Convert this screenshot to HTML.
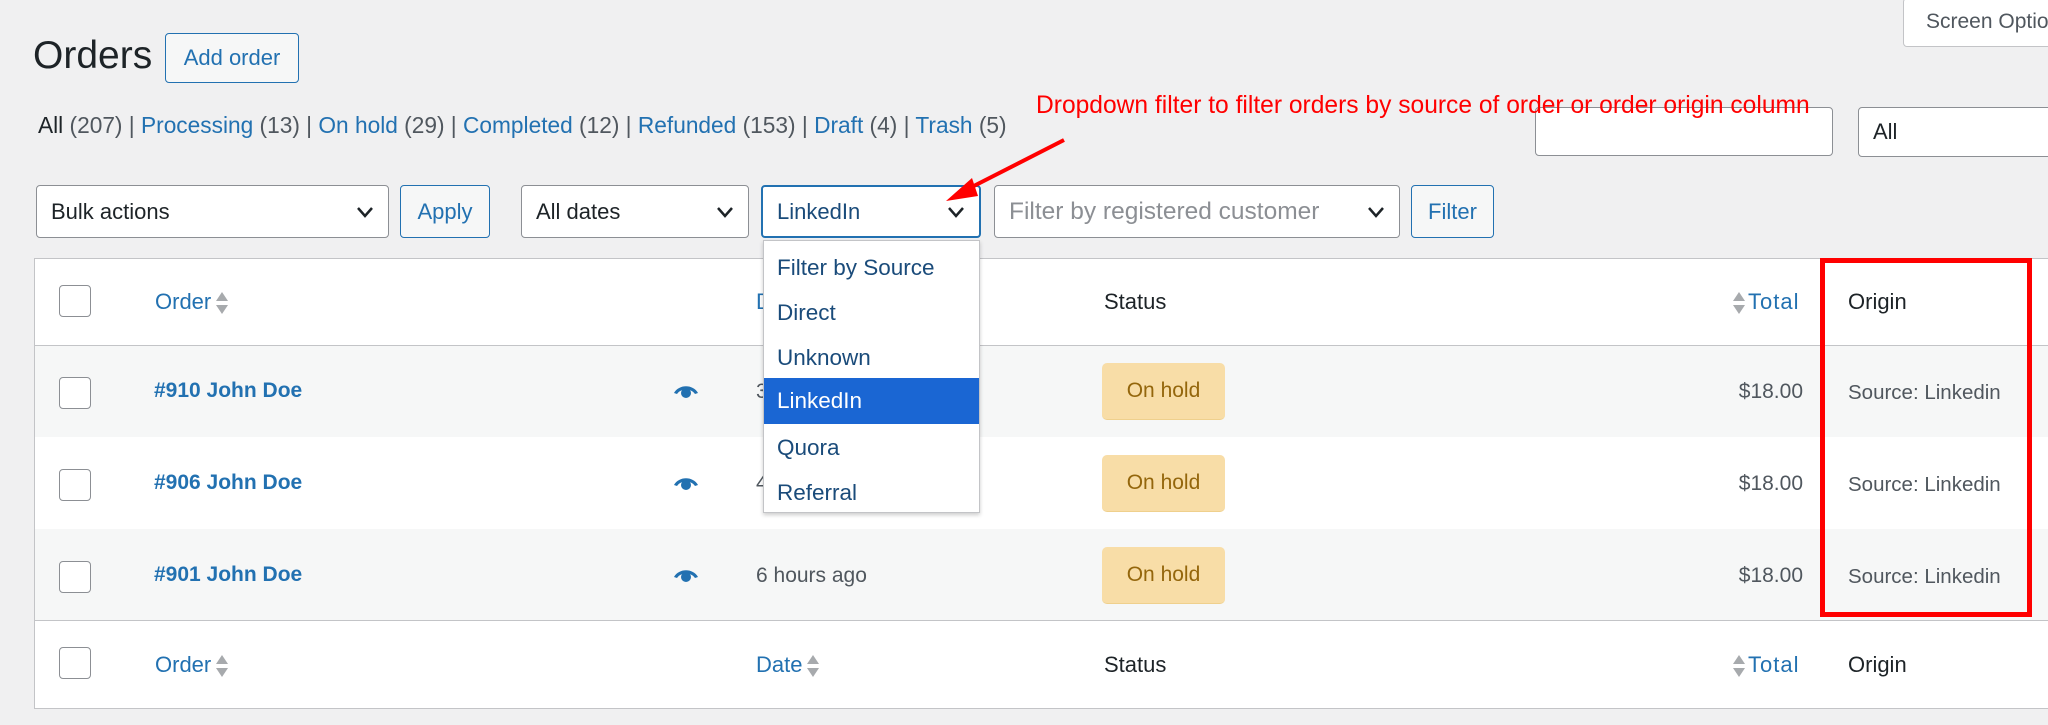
<!DOCTYPE html>
<html><head><meta charset="utf-8"><style>
*{box-sizing:border-box;margin:0;padding:0}
body{width:2048px;height:725px;background:#f0f0f1;font-family:"Liberation Sans",sans-serif;color:#1d2327;position:relative;overflow:hidden}
.a{position:absolute;white-space:nowrap}
.blue{color:#2271b1}
.sel{position:absolute;background:#fff;border:1px solid #8c8f94;border-radius:4px;font-size:22px;padding-left:14px;display:flex;align-items:center}
.sel svg{position:absolute;right:14px;top:50%;margin-top:-6px}
.btn{position:absolute;background:#f6f7f7;border:1px solid #2271b1;border-radius:4px;color:#2271b1;font-size:22px;display:flex;align-items:center;justify-content:center}
.cb{position:absolute;left:59px;width:32px;height:32px;border:1px solid #8c8f94;border-radius:4px;background:#fff}
.badge{position:absolute;left:1102px;width:123px;height:57px;background:#f8dda7;border-radius:5px;color:#94660c;font-size:21px;display:flex;align-items:center;justify-content:center;border-bottom:1px solid #efd08d}
.row{position:absolute;left:35px;width:2013px;height:92px}
.t{font-size:21px}
.opt{position:absolute;left:0;width:100%;height:45px;padding-left:13px;font-size:22.5px;color:#1a4b7a;display:flex;align-items:center}
.sa{display:inline-block;vertical-align:middle;margin:0 4px}
</style></head><body>
<div class="a" style="left:1903px;top:-2px;width:160px;height:49px;background:#fff;border:1px solid #c3c4c7;border-radius:4px;font-size:21px;color:#50575e;padding:11px 0 0 22px">Screen Options</div>
<div class="a" style="left:33px;top:34px;font-size:39px;color:#1d2327">Orders</div>
<div class="btn" style="left:165px;top:33px;width:134px;height:50px">Add order</div>
<div class="a" style="left:38px;top:112px;font-size:22.7px;color:#50575e"><span style="color:#1d2327">All</span> (207) | <span class="blue">Processing</span> (13) | <span class="blue">On hold</span> (29) | <span class="blue">Completed</span> (12) | <span class="blue">Refunded</span> (153) | <span class="blue">Draft</span> (4) | <span class="blue">Trash</span> (5)</div>
<div class="a" style="left:1535px;top:107px;width:298px;height:49px;background:#fff;border:1px solid #8c8f94;border-radius:4px"></div>
<div class="sel" style="left:1858px;top:107px;width:220px;height:50px">All</div>
<div class="a" style="left:1036px;top:92px;font-size:24.6px;color:#f00">Dropdown filter to filter orders by source of order or order origin column</div>

<div class="sel" style="left:36px;top:185px;width:353px;height:53px">Bulk actions<svg width="18" height="12"><path d="M2 2l7 8 7-8" stroke="#1d2327" stroke-width="2.5" fill="none"/></svg></div>
<div class="btn" style="left:400px;top:185px;width:90px;height:53px">Apply</div>
<div class="sel" style="left:521px;top:185px;width:228px;height:53px">All dates<svg width="18" height="12"><path d="M2 2l7 8 7-8" stroke="#1d2327" stroke-width="2.5" fill="none"/></svg></div>
<div class="sel" style="left:761px;top:185px;width:220px;height:53px;border:2px solid #2271b1;color:#1a4b7a">LinkedIn<svg width="18" height="12"><path d="M2 2l7 8 7-8" stroke="#1d2327" stroke-width="2.5" fill="none"/></svg></div>
<div class="sel" style="left:994px;top:185px;width:406px;height:53px;color:#8c8f94;font-size:24.5px">Filter by registered customer<svg width="18" height="12"><path d="M2 2l7 8 7-8" stroke="#1d2327" stroke-width="2.5" fill="none"/></svg></div>
<div class="btn" style="left:1411px;top:185px;width:83px;height:53px">Filter</div>

<div class="a" style="left:34px;top:258px;width:2020px;height:451px;background:#fff;border:1px solid #c3c4c7"></div>
<div class="row" style="top:345px;background:#f6f7f7;border-top:1px solid #c3c4c7"></div>
<div class="row" style="top:437px;background:#fff"></div>
<div class="row" style="top:529px;background:#f6f7f7;height:92px;border-bottom:1px solid #c3c4c7"></div>

<div class="cb" style="top:285px"></div>
<div class="a t blue" style="left:155px;top:289px;font-size:22px">Order<svg class="sa" width="14" height="24"><path d="M7 1L13 10H1Z M7 23L13 14H1Z" fill="#a7aaad"/></svg></div>
<div class="a t" style="left:756px;top:289px;color:#2271b1;font-size:22px">Date</div>
<div class="a t" style="left:1104px;top:289px;font-size:22px">Status</div>
<div class="a t blue" style="left:1732px;top:289px;font-size:22px"><svg class="sa" style="margin:0 2px 0 0" width="14" height="24"><path d="M7 1L13 10H1Z M7 23L13 14H1Z" fill="#a7aaad"/></svg><span style="letter-spacing:1px">Total</span></div>
<div class="a t" style="left:1848px;top:289px;font-size:22px">Origin</div>

<div class="cb" style="top:377px"></div><div class="cb" style="top:469px"></div><div class="cb" style="top:561px"></div>
<div class="a t blue" style="left:154px;top:379px;font-weight:bold">#910 John Doe</div>
<div class="a t blue" style="left:154px;top:471px;font-weight:bold">#906 John Doe</div>
<div class="a t blue" style="left:154px;top:563px;font-weight:bold">#901 John Doe</div>
<svg class="a" style="left:673px;top:384px" width="26" height="16"><path d="M1 9C6 0 20 0 25 9L22 10C18 4 8 4 4 10Z" fill="#2271b1"/><circle cx="13" cy="9" r="5" fill="#2271b1"/></svg>
<svg class="a" style="left:673px;top:476px" width="26" height="16"><path d="M1 9C6 0 20 0 25 9L22 10C18 4 8 4 4 10Z" fill="#2271b1"/><circle cx="13" cy="9" r="5" fill="#2271b1"/></svg>
<svg class="a" style="left:673px;top:568px" width="26" height="16"><path d="M1 9C6 0 20 0 25 9L22 10C18 4 8 4 4 10Z" fill="#2271b1"/><circle cx="13" cy="9" r="5" fill="#2271b1"/></svg>
<div class="a t" style="left:756px;top:380px;color:#50575e">3 hours ago</div>
<div class="a t" style="left:756px;top:472px;color:#50575e">4 hours ago</div>
<div class="a t" style="left:756px;top:564px;color:#50575e">6 hours ago</div>
<div class="badge" style="top:363px">On hold</div>
<div class="badge" style="top:455px">On hold</div>
<div class="badge" style="top:547px">On hold</div>
<div class="a t" style="right:245px;top:380px;color:#50575e">$18.00</div>
<div class="a t" style="right:245px;top:472px;color:#50575e">$18.00</div>
<div class="a t" style="right:245px;top:564px;color:#50575e">$18.00</div>
<div class="a" style="left:1848px;top:381px;font-size:20.5px;color:#50575e">Source: Linkedin</div>
<div class="a" style="left:1848px;top:473px;font-size:20.5px;color:#50575e">Source: Linkedin</div>
<div class="a" style="left:1848px;top:565px;font-size:20.5px;color:#50575e">Source: Linkedin</div>

<div class="cb" style="top:647px"></div>
<div class="a t blue" style="left:155px;top:652px;font-size:22px">Order<svg class="sa" width="14" height="24"><path d="M7 1L13 10H1Z M7 23L13 14H1Z" fill="#a7aaad"/></svg></div>
<div class="a t blue" style="left:756px;top:652px;font-size:22px">Date<svg class="sa" width="14" height="24"><path d="M7 1L13 10H1Z M7 23L13 14H1Z" fill="#a7aaad"/></svg></div>
<div class="a t" style="left:1104px;top:652px;font-size:22px">Status</div>
<div class="a t blue" style="left:1732px;top:652px;font-size:22px"><svg class="sa" style="margin:0 2px 0 0" width="14" height="24"><path d="M7 1L13 10H1Z M7 23L13 14H1Z" fill="#a7aaad"/></svg><span style="letter-spacing:1px">Total</span></div>
<div class="a t" style="left:1848px;top:652px;font-size:22px">Origin</div>

<div class="a" style="left:1820px;top:258px;width:212px;height:359px;border:5px solid #f00"></div>

<div class="a" style="left:763px;top:240px;width:217px;height:273px;background:#fff;border:1px solid #c3c4c7;box-shadow:0 2px 4px rgba(0,0,0,.2)">
<div class="opt" style="top:4px">Filter by Source</div>
<div class="opt" style="top:49px">Direct</div>
<div class="opt" style="top:94px">Unknown</div>
<div class="opt" style="top:137px;height:46px;background:#1a66d3;color:#fff">LinkedIn</div>
<div class="opt" style="top:184px">Quora</div>
<div class="opt" style="top:229px">Referral</div>
</div>

<svg class="a" style="left:0;top:0" width="2048" height="725"><line x1="1064" y1="140" x2="962" y2="192" stroke="#f00" stroke-width="4"/><path d="M946 201L972 178L978 196Z" fill="#f00"/></svg>
</body></html>
